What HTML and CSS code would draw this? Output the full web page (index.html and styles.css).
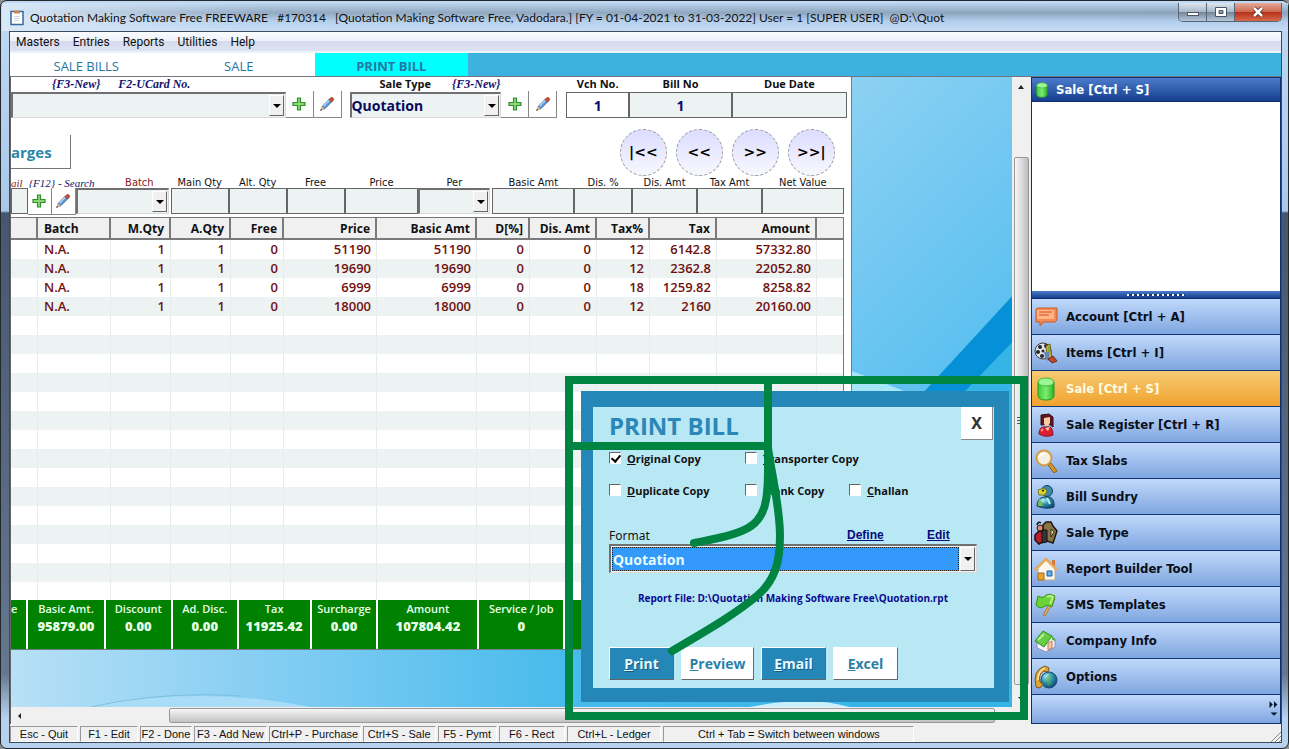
FILE: index.html
```html
<!DOCTYPE html>
<html lang="en">
<head>
<meta charset="utf-8">
<title>Quotation Making Software Free</title>
<link rel="stylesheet" href="styles.css">
</head>
<body>
<svg class="defs" aria-hidden="true">
  <defs>
    <linearGradient id="sky" x1="0" y1="0" x2="1" y2="0"><stop offset="0" stop-color="#b8e0f6"/><stop offset=".25" stop-color="#86cef3"/><stop offset=".55" stop-color="#48bbec"/><stop offset="1" stop-color="#35b4e8"/></linearGradient>
    <linearGradient id="skyRight" x1="0" y1="0" x2="0.25" y2="1"><stop offset="0" stop-color="#8dd1f3"/><stop offset=".6" stop-color="#5bc0f0"/><stop offset="1" stop-color="#4dbcee"/></linearGradient>
    <linearGradient id="green" x1="0" y1="0" x2="1" y2="0"><stop offset="0" stop-color="#3fc93b"/><stop offset=".5" stop-color="#7aee70"/><stop offset="1" stop-color="#2fae2b"/></linearGradient>
    <radialGradient id="globe" cx=".35" cy=".3" r=".8"><stop offset="0" stop-color="#b9f0f2"/><stop offset=".45" stop-color="#2b94ab"/><stop offset="1" stop-color="#0c3c70"/></radialGradient>
    <symbol id="plus" viewBox="0 0 16 16"><path d="M6.500 2h3v4.500H14v3H9.500V14h-3V9.500H2v-3h4.500z" fill="#8ed678" stroke="#2f8f2a" stroke-width="1.200"/></symbol>
    <symbol id="pencil" viewBox="0 0 16 16"><path d="M2 14l1.500-4 7-7 2.500 2.500-7 7z" fill="#5c9be0" stroke="#2f4f80" stroke-width=".8"/><path d="M4.500 10l6-6" stroke="#b6d8fa" stroke-width="1.200"/><path d="M10 3.500l2-2q3 0 2.500 2.500l-2 2z" fill="#d0502c" stroke="#8b2f18" stroke-width=".8"/><path d="M1.500 14.500l1.500-4 2.500 2.500z" fill="#e9bd80"/><path d="M1 15l1-2 1 1z" fill="#222"/></symbol>
    <symbol id="cylinder" viewBox="0 0 24 24"><path d="M4 5v14q1 4 8 4t8-4V5z" fill="url(#green)" stroke="#229a20"/><path d="M4 5q1-4 8-4t8 4q-1 4-8 4T4 5z" fill="#9df594" stroke="#40b83b"/></symbol>
  </defs>
</svg>

<div class="window">
  <header class="titlebar">
    <svg class="title-icon" viewBox="0 0 14 16"><rect x="1" y="2" width="12" height="13" fill="#fff" stroke="#36699b" stroke-width="1.500"/><path d="M4 1h6v3H4z" fill="#c88458"/><path d="M4 7h6M4 9h6M4 11h5" stroke="#cbd8e8"/></svg>
    <span class="title-text">Quotation Making Software Free FREEWARE &nbsp; #170314 &nbsp; [Quotation Making Software Free, Vadodara.] [FY = 01-04-2021 to 31-03-2022] User = 1 [SUPER USER] &nbsp;@D:\Quot</span>
    <div class="window-buttons">
      <button class="wbtn" aria-label="Minimize"><svg viewBox="0 0 14 12"><rect x="1.500" y="6.500" width="11" height="3" fill="#fff" stroke="#4b5563"/></svg></button>
      <button class="wbtn" aria-label="Maximize"><svg viewBox="0 0 14 12"><path d="M1.500 1.500h11v9h-11zM5 4.500h4v3H5z" fill="#fff" stroke="#4b5563" fill-rule="evenodd"/></svg></button>
      <button class="wbtn wbtn-close" aria-label="Close"><svg viewBox="0 0 14 12"><path d="M3 2l8 8M11 2l-8 8" stroke="#4b2020" stroke-width="4"/><path d="M3 2l8 8M11 2l-8 8" stroke="#fff" stroke-width="2.500"/></svg></button>
    </div>
  </header>

  <div class="client">
    <nav class="menubar">
      <button>Masters</button><button>Entries</button><button>Reports</button><button>Utilities</button><button>Help</button>
    </nav>
    <nav class="tabs">
      <button class="tab">SALE BILLS</button><button class="tab">SALE</button><button class="tab tab-active">PRINT BILL</button>
    </nav>

    <div class="main">
      <div class="workspace">
        <div class="canvas">
          <svg class="wallpaper" viewBox="0 0 1003 629" preserveAspectRatio="none" aria-hidden="true">
            <rect width="1003" height="629" fill="url(#sky)"/>
            <rect x="841" width="162" height="629" fill="url(#skyRight)"/>
            <path d="M945 325L1003 265v364H841V325z" fill="#35b4e6"/>
            <path d="M841 293q50 18 80 32h-80z" fill="#a5e7f8"/>
            <path d="M905 325L1003 219v46L945 325z" fill="#0590d8"/>
            <path d="M80 629q110-22 220 0z" fill="#a9dcf6"/><path d="M80 629q70-16 150-11" stroke="#7cc0dc" fill="none"/>
            <path d="M740 629q60-12 100 0z" fill="#c9f0fb"/>
          </svg>

          <div class="form">
            <div class="head-grid">
              <div class="field">
                <div class="caption caption-party"><em>{F3-New}</em><em>F2-UCard No.</em></div>
                <div class="combo"><select aria-label="Party"><option></option></select><span class="arrow"></span></div>
              </div>
              <div class="tools"><button aria-label="Add party"><svg><use href="#plus"/></svg></button><button aria-label="Edit party"><svg><use href="#pencil"/></svg></button></div>
              <span></span>
              <div class="field">
                <div class="caption caption-type"><label for="stype">Sale Type</label><em>{F3-New}</em></div>
                <div class="combo"><select id="stype"><option>Quotation</option></select><span class="arrow"></span></div>
              </div>
              <div class="tools"><button aria-label="Add type"><svg><use href="#plus"/></svg></button><button aria-label="Edit type"><svg><use href="#pencil"/></svg></button></div>
              <span></span>
              <div class="field"><label class="caption" for="vch">Vch No.</label><input class="box box-white" id="vch" value="1"></div>
              <div class="field"><label class="caption" for="bill">Bill No</label><input class="box" id="bill" value="1"></div>
              <div class="field"><label class="caption" for="due">Due Date</label><input class="box" id="due"></div>
            </div>

            <div class="nav-row">
              <button class="charges">arges</button>
              <div class="record-nav">
                <button>|&lt;&lt;</button><button>&lt;&lt;</button><button>&gt;&gt;</button><button>&gt;&gt;|</button>
              </div>
            </div>

            <div class="entry-grid">
              <div class="field item-field">
                <div class="caption"><em class="maroon">ail</em><em>{F12} - Search</em></div>
                <div class="item-tools"><input class="box" aria-label="Item"><div class="tools"><button aria-label="Add item"><svg><use href="#plus"/></svg></button><button aria-label="Edit item"><svg><use href="#pencil"/></svg></button></div></div>
              </div>
              <div class="field batch"><label class="caption maroon" for="e0">Batch</label><div class="combo"><select id="e0"><option></option></select><span class="arrow"></span></div></div>
              <span></span>
              <div class="field"><label class="caption" for="e1">Main Qty</label><input class="box" id="e1"></div>
              <div class="field"><label class="caption" for="e2">Alt. Qty</label><input class="box" id="e2"></div>
              <div class="field"><label class="caption" for="e3">Free</label><input class="box" id="e3"></div>
              <div class="field"><label class="caption" for="e4">Price</label><input class="box" id="e4"></div>
              <div class="field"><label class="caption" for="e5">Per</label><div class="combo"><select id="e5"><option></option></select><span class="arrow"></span></div></div>
              <span></span>
              <div class="field"><label class="caption" for="e6">Basic Amt</label><input class="box" id="e6"></div>
              <div class="field"><label class="caption" for="e7">Dis. %</label><input class="box" id="e7"></div>
              <div class="field"><label class="caption" for="e8">Dis. Amt</label><input class="box" id="e8"></div>
              <div class="field"><label class="caption" for="e9">Tax Amt</label><input class="box" id="e9"></div>
              <div class="field"><label class="caption" for="e10">Net Value</label><input class="box" id="e10"></div>
            </div>

            <div class="lines">
              <table>
                <colgroup><col class="c27"><col class="c73"><col class="c60"><col class="c60"><col class="c53"><col class="c93"><col class="c100"><col class="c53"><col class="c67"><col class="c53"><col class="c67"><col class="c100"><col></colgroup>
                <thead><tr><th></th><th class="left">Batch</th><th>M.Qty</th><th>A.Qty</th><th>Free</th><th>Price</th><th>Basic Amt</th><th>D[%]</th><th>Dis. Amt</th><th>Tax%</th><th>Tax</th><th>Amount</th><th></th></tr></thead>
                <tbody>
                  <tr><td></td><td class="left">N.A.</td><td>1</td><td>1</td><td>0</td><td>51190</td><td>51190</td><td>0</td><td>0</td><td>12</td><td>6142.8</td><td>57332.80</td><td></td></tr>
                  <tr><td></td><td class="left">N.A.</td><td>1</td><td>1</td><td>0</td><td>19690</td><td>19690</td><td>0</td><td>0</td><td>12</td><td>2362.8</td><td>22052.80</td><td></td></tr>
                  <tr><td></td><td class="left">N.A.</td><td>1</td><td>1</td><td>0</td><td>6999</td><td>6999</td><td>0</td><td>0</td><td>18</td><td>1259.82</td><td>8258.82</td><td></td></tr>
                  <tr><td></td><td class="left">N.A.</td><td>1</td><td>1</td><td>0</td><td>18000</td><td>18000</td><td>0</td><td>0</td><td>12</td><td>2160</td><td>20160.00</td><td></td></tr>
                  <tr class="filler"><td></td><td></td><td></td><td></td><td></td><td></td><td></td><td></td><td></td><td></td><td></td><td></td><td></td></tr>
                </tbody>
              </table>
            </div>

            <div class="totals">
              <div class="clip"><span>e</span></div>
              <div><span>Basic Amt.</span><b>95879.00</b></div>
              <div><span>Discount</span><b>0.00</b></div>
              <div><span>Ad. Disc.</span><b>0.00</b></div>
              <div><span>Tax</span><b>11925.42</b></div>
              <div><span>Surcharge</span><b>0.00</b></div>
              <div><span>Amount</span><b>107804.42</b></div>
              <div><span>Service / Job</span><b>0</b></div>
              <div></div>
            </div>
          </div>
        </div>
        <div class="vscroll"><i class="up"></i><div class="vthumb"><span class="ridges"></span></div><i class="down"></i></div>
        <div class="hscroll"><i class="back"></i><div class="hthumb"><span class="ridges"></span></div><i class="forward"></i></div>

        <section class="callout">
          <div class="dialog" role="dialog" aria-label="Print bill">
            <div class="dialog-head"><h1>PRINT BILL</h1><button class="close">X</button></div>
            <div class="dialog-body">
              <div class="checks">
                <label><input type="checkbox" checked><span><u>O</u>riginal Copy</span></label>
                <label><input type="checkbox"><span><u>T</u>ransporter Copy</span></label>
                <span></span>
                <label><input type="checkbox"><span><u>D</u>uplicate Copy</span></label>
                <label><input type="checkbox"><span><u>B</u>lank Copy</span></label>
                <label><input type="checkbox"><span><u>C</u>hallan</span></label>
              </div>
              <div class="format-head"><label for="format">Format</label><a href="#define">Define</a><a href="#edit">Edit</a></div>
              <div class="combo format"><select id="format"><option>Quotation</option></select><span class="arrow"></span></div>
              <p class="report">Report File: D:\Quotation Making Software Free\Quotation.rpt</p>
              <div class="actions">
                <button class="solid"><u>P</u>rint</button><button class="wide"><u>P</u>review</button><button class="solid"><u>E</u>mail</button><button><u>E</u>xcel</button>
              </div>
            </div>
          </div>
          <svg class="ink" viewBox="0 0 463 344" aria-hidden="true"><g fill="none" stroke="#008442" stroke-width="8" stroke-linecap="round" stroke-linejoin="round"><path d="M4 4h455v336H4z" stroke-linejoin="miter"/><path d="M4 70h199V4"/><path d="M203 66v28c0 28-2 48-20 58-15 8-34 11-54 15"/><path d="M203 72c4 28 12 60 12 88 0 26-5 44-22 59-25 21-54 37-86 56"/></g></svg>
        </section>
      </div>

      <aside class="sidebar">
        <div class="side-head"><svg><use href="#cylinder"/></svg>Sale [Ctrl + S]</div>
        <div class="side-blank"></div>
        <div class="splitter"></div>
        <button class="item"><svg viewBox="0 0 24 24"><path d="M2 4l1-1h20v12l-2 2H9l-3 4v-4H2z" fill="#f38b55" stroke="#c65d2c"/><path d="M3 5h17v9H3z" fill="#ffb589"/><path d="M5 7h13M5 10h10" stroke="#e37039" stroke-width="1.500"/></svg>Account [Ctrl + A]</button>
        <button class="item"><svg viewBox="0 0 24 24"><circle cx="9" cy="10" r="8" fill="#e2e5e8" stroke="#3b3d42"/><g fill="#24262b"><circle cx="6" cy="6" r="2"/><circle cx="12" cy="5" r="2"/><circle cx="4" cy="11" r="2"/><circle cx="8" cy="15" r="2"/><circle cx="9" cy="10" r="1.500"/></g><path d="M12 5l4-2 2 14-5 2z" fill="#d8b438" stroke="#755d20"/><path d="M14 5h2v10h-3z" fill="#70b541"/><path d="M10 11h5v9l-4-3z" fill="#6686b9"/><path d="M14 18l5-3 4 5-5 2z" fill="#c14827" stroke="#69301f"/></svg>Items [Ctrl + I]</button>
        <button class="item item-active"><svg><use href="#cylinder"/></svg>Sale [Ctrl + S]</button>
        <button class="item"><svg viewBox="0 0 24 24"><path d="M7 12V2l8-1 4 3v10l-4-3z" fill="#611522" stroke="#3d0d16"/><path d="M10 5l6-1v6l-3 4-3-3z" fill="#f4cda5"/><path d="M5 21q0-8 7-7 7-2 7 8-7 3-14-1z" fill="#db2030" stroke="#8b1020"/><path d="M11 15l3 3 2-4z" fill="#f4cda5"/><path d="M7 18l2-2" stroke="#ff8c8c" stroke-width="2"/></svg>Sale Register [Ctrl + R]</button>
        <button class="item"><svg viewBox="0 0 24 24"><path d="M14 16l3-2 6 8-3 2z" fill="#d8942c" stroke="#88591b"/><circle cx="10" cy="9" r="7.500" fill="#f5efe0" stroke="#d19b48" stroke-width="2"/><path d="M5 8q2-4 6-3" stroke="#fff" stroke-width="2" fill="none"/></svg>Tax Slabs</button>
        <button class="item"><svg viewBox="0 0 24 24"><path d="M3 21q0-8 7-9h6q5 3 4 10-8 3-17-1z" fill="url(#globe)" stroke="#174466"/><circle cx="13" cy="6" r="5.500" fill="#3d87a8" stroke="#174466"/><path d="M4 5l6-2 3 3-2 4-6 0z" fill="#d7d330" stroke="#777b24"/><circle cx="9" cy="5.500" r="1" fill="#111"/><path d="M5 13l4 8H4z" fill="#87bc45"/><path d="M13 13l3 6" stroke="#bbf1e8" stroke-width="2"/></svg>Bill Sundry</button>
        <button class="item"><svg viewBox="0 0 24 24"><path d="M9 4l3-3h5l2 4 4 5-4 12-9-3z" fill="#8a7444" stroke="#1c1911" stroke-width="1.500"/><path d="M17 8l3 3-3 5z" fill="#f3e9b8" stroke="#302b1b"/><path d="M1 14l4-4 5 1v9l-5 3-4-4z" fill="#b8202c" stroke="#260e0e" stroke-width="1.500"/><path d="M8 9h5v12l-5 1z" fill="#34363b" stroke="#111"/><circle cx="6" cy="7" r="3" fill="#e48a72" stroke="#241a16"/><path d="M3 4q1-4 4-2" fill="none" stroke="#111" stroke-width="1.500"/></svg>Sale Type</button>
        <button class="item"><svg viewBox="0 0 24 24"><path d="M18 7V3h3v7z" fill="#d47836"/><path d="M4 11v12h17V11l-9-8z" fill="#fcf7ed" stroke="#b8aa94"/><path d="M1 13L12 2l11 11" fill="none" stroke="#e5aa60" stroke-width="2.500"/><path d="M4 16h6v7H4z" fill="#e8a332" stroke="#a66720"/><path d="M13 14h5v5h-5z" fill="#5ab3ec" stroke="#245d9f"/></svg>Report Builder Tool</button>
        <button class="item"><svg viewBox="0 0 24 24"><path d="M19 5l2 1-10 17-2-1z" fill="#e2b263" stroke="#af762e"/><path d="M4 3q5 3 8-1 4-2 9 1l-3 11q-4-3-7-1-5 4-9-1z" fill="#6bd337" stroke="#389516"/><path d="M13 4q3-2 6 0l-3 7" stroke="#baf18b" stroke-width="2" fill="none"/></svg>SMS Templates</button>
        <button class="item"><svg viewBox="0 0 24 24"><path d="M3 13v6l9 4 9-5v-8l-6-4z" fill="#f4f2fb" stroke="#9488bd"/><path d="M1 12L9 2l9 5-8 11z" fill="#66ce45" stroke="#2f9220"/><path d="M18 7l4 5-4-1z" fill="#4db332"/><path d="M14 14l4-2v7l-4 2z" fill="#f5c6a0" stroke="#bc825b"/><path d="M4 11l6-6" stroke="#b9f09a" stroke-width="2"/></svg>Company Info</button>
        <button class="item"><svg viewBox="0 0 24 24"><circle cx="15" cy="15" r="8" fill="url(#globe)" stroke="#184d75"/><path d="M11 13l4-3 4 2-3 3 2 4-4 2z" fill="#5aa950" opacity=".5"/><path d="M2 22Q-2 5 11 1l4 2-1 4-4-1Q4 9 6 17l3 2-3 4z" fill="#dda634" stroke="#7d551c"/><path d="M4 15q0-9 7-12" stroke="#ffe59a" fill="none" stroke-width="1.500"/></svg>Options</button>
        <div class="side-foot"><svg viewBox="0 0 10 16"><path d="M1 1l3 3-3 3zM5 1l3 3-3 3zM2 11h6l-3 3z" fill="#08142c"/></svg></div>
      </aside>
    </div>

    <footer class="statusbar">
      <span>Esc - Quit</span><span>F1 - Edit</span><span>F2 - Done</span><span>F3 - Add New</span><span>Ctrl+P - Purchase</span><span>Ctrl+S - Sale</span><span>F5 - Pymt</span><span>F6 - Rect</span><span>Ctrl+L - Ledger</span><span>Ctrl + Tab = Switch between windows</span>
      <svg class="grip" viewBox="0 0 10 10"><path d="M0 10L10 0M4 10l6-6M8 10l2-2" stroke="#888"/></svg>
    </footer>
  </div>
</div>
</body>
</html>
```
FILE: styles.css
```css
* { box-sizing: border-box; }
body { margin: 0; font-family: "Noto Sans", sans-serif; font-size: 12px; color: #111; background: #8d8d8d; }
button, input, select { font: inherit; color: inherit; margin: 0; padding: 0; border: 0; border-radius: 0; min-width: 0; }
em { font-family: "Liberation Serif", serif; color: #14146c; }
.defs { position: absolute; width: 0; height: 0; }

.window { display: flex; flex-direction: column; min-height: 100vh; padding: 2px 0 0 1px; border: 1px solid #23272e; border-radius: 7px; background: linear-gradient(#c0d9f3 0, #a9c8e8 210px, #46576d 212px, #64788f 90%, #b7d2ef 96%); }
.titlebar { display: flex; align-items: center; height: 28px; padding: 0 6px 0 8px; background: linear-gradient(90deg, #d7e8f8 0, rgba(215,232,248,.1) 20%, rgba(215,232,248,0)), linear-gradient(#b9d3ee, #8ba2bb 35%, #b2cdec 65%, #c5dcf5); }
.title-icon { width: 14px; height: 17px; margin-right: 6px; }
.title-text { flex: 1; white-space: nowrap; overflow: hidden; font-family: Lato, sans-serif; font-size: 12px; }
.window-buttons { display: flex; align-self: flex-start; border: 1px solid #566474; border-top: 0; border-radius: 0 0 5px 5px; overflow: hidden; }
.wbtn { display: flex; align-items: center; justify-content: center; width: 28px; height: 18px; background: linear-gradient(#dbe6f1, #a9b9ca 48%, #758698 52%, #b5c8db); border-right: 1px solid #566474; }
.wbtn svg { width: 14px; height: 12px; }
.wbtn-close { width: 46px; border: 0; background: linear-gradient(#e5aa99, #cd6a50 48%, #b6311b 52%, #d86a4b); }

.client { flex: 1; display: flex; flex-direction: column; margin: 0 6px 5px 7px; border: 1px solid #3c4a5c; background: #f0f0f0; }
.menubar { display: flex; align-items: center; gap: 13px; height: 19px; padding-left: 6px; background: linear-gradient(#fbfcfe, #eef1f9 45%, #d6dcee 50%, #dde2f3); }
.menubar button { background: none; font-family: Roboto, sans-serif; font-size: 12px; line-height: 18px; }
.tabs { display: flex; height: 26px; background: #3fb1e0; border-top: 2px solid #eaf4f6; border-bottom: 1px solid #70777c; }
.tab { flex: 0 0 12%; padding-top: 2px; font-family: "Open Sans", sans-serif; font-size: 13px; color: #2577a4; background: #fff; }
.tab-active { background: #0ff; font-weight: 700; }

.main { flex: 1; display: grid; grid-template-columns: minmax(0, 1fr) 250px; }
.workspace { position: relative; display: grid; grid-template-columns: minmax(0, 1fr) 18px; grid-template-rows: 1fr 17px; margin-right: 1px; border-left: 1px solid #666; }
.canvas { position: relative; padding-bottom: 57px; display: flex; }
.wallpaper { position: absolute; inset: 0; width: 100%; height: 100%; }
.form { position: relative; width: 84%; display: flex; flex-direction: column; background: #fff; border-right: 1px solid #6d7f88; border-bottom: 1px solid #6d7f88; }

.field { display: flex; flex-direction: column; min-width: 0; }
.caption { display: block; height: 14px; line-height: 14px; text-align: center; white-space: nowrap; }
.combo { position: relative; display: flex; height: 26px; border: 1px solid #d8d8d8; border-top: 2px solid #707070; border-left: 2px solid #707070; background: #edf2f3; }
.combo select { flex: 1; appearance: none; background: transparent; font-size: 14px; font-weight: 700; color: #0a0a5c; }
.arrow { position: absolute; right: 1px; top: 1px; bottom: 1px; width: 15px; background: #f0f0f0; border: 1px solid #fff; border-right-color: #666; border-bottom-color: #666; pointer-events: none; }
.arrow::after { content: ""; position: absolute; left: 3px; top: calc(50% - 2px); border: 4px solid transparent; border-top-color: #000; border-bottom: 0; }
.box { width: 100%; height: 26px; border: 1px solid #666; background: #edf2f3; text-align: center; font-size: 14px; font-weight: 700; color: #0a0a6c; }
.box-white { background: #fff; }
.tools { display: flex; align-self: end; height: 27px; }
.tools button { flex: 1; display: flex; align-items: center; justify-content: center; background: #fff; border-right: 1px solid #888; border-bottom: 1px solid #888; }
.tools svg { width: 16px; height: 16px; }

.head-grid { display: grid; grid-template-columns: 275fr 56fr 8fr 152fr 56fr 9fr 63fr 103fr 115fr; padding-right: 4px; }
.head-grid .caption { height: 15px; font-family: "Open Sans", sans-serif; font-size: 11px; font-weight: 700; }
.head-grid em { font-size: 12px; }
.head-grid .caption-party { display: flex; gap: 18px; padding-left: 41px; }
.head-grid .caption-type { display: flex; gap: 21px; padding-left: 30px; }

.nav-row { display: flex; justify-content: space-between; align-items: center; height: 58px; padding-right: 16px; }
.charges { width: 60px; height: 34px; margin-top: 10px; padding-right: 20px; background: #fff; border-right: 1px solid #777; border-bottom: 1px solid #777; font-family: "Open Sans", sans-serif; font-size: 15px; font-weight: 700; color: #2b87a8; }
.record-nav { display: flex; gap: 9px; margin-top: 10px; }
.record-nav button { width: 47px; height: 47px; border: 1px dashed #999; border-radius: 50%; background: linear-gradient(#dcdcff, #f8f8ff); font-family: "DejaVu Sans", sans-serif; font-size: 14px; font-weight: 700; color: #000; }

.entry-grid { display: grid; grid-template-columns: 65fr 93fr 2fr 58fr 58fr 58fr 74fr 72fr 2fr 82fr 58fr 65fr 65fr 82fr; padding-right: 7px; }
.entry-grid .caption { height: 12px; line-height: 14px; font-family: "DejaVu Sans Condensed", "DejaVu Sans", sans-serif; font-size: 11px; }
.entry-grid .item-field .caption { display: flex; gap: 6px; width: 90px; }
.entry-grid .batch .caption { padding-left: 34px; }
.entry-grid em { font-size: 11px; }
.entry-grid .maroon { color: #8b1a1a; }
.item-tools { display: grid; grid-template-columns: 17fr 48fr; }

.lines { flex: 1; display: flex; margin: 2px 7px 0 0; border-top: 1px solid #777; border-right: 1px solid #777; }
table { width: 100%; height: 100%; border-collapse: separate; border-spacing: 0; table-layout: fixed; }
.c27 { width: 27px; } .c53 { width: 53px; } .c60 { width: 60px; } .c67 { width: 67px; } .c73 { width: 73px; } .c93 { width: 93px; } .c100 { width: 100px; }
th, td { height: 19px; padding: 0 5px 0 6px; text-align: right; white-space: nowrap; line-height: 19px; border-right: 1px solid #e6ecec; font-family: "Open Sans", sans-serif; font-size: 13px; font-weight: 600; }
td { color: #6f1010; vertical-align: top; }
th { height: 22px; background: #f0f0f0; color: #111; border-right: 2px solid #7a7a7a; border-bottom: 2px solid #7a7a7a; font-size: 12px; font-weight: 700; }
th:last-child, td:last-child { border-right: 0; padding: 0; }
th.left, td.left { text-align: left; }
tbody tr:nth-child(even) td { background: #edf2f3; }
.filler td { height: auto; background: repeating-linear-gradient(#fff 0 19px, #edf2f3 19px 38px); }

.totals { display: grid; grid-template-columns: 15fr 76fr 65fr 64fr 71fr 65fr 99fr 84fr 286fr; gap: 2px; height: 49px; }
.totals div { min-width: 0; background: #008200; color: #e8ffe8; display: flex; flex-direction: column; align-items: center; line-height: 17px; white-space: nowrap; font-family: "Open Sans", sans-serif; font-size: 11px; font-weight: 600; }
.totals b { font-size: 13px; line-height: 19px; }
.totals .clip { align-items: flex-start; }

.vscroll { display: flex; flex-direction: column; align-items: center; padding: 8px 0 7px; background: #f0f0f0; }
.vthumb { flex: 1; width: 15px; margin: 68px 0 12px; border: 1px solid #999; border-radius: 2px; background: linear-gradient(90deg, #f6f6f6, #d6d6d8 60%, #bdbdc3); }
.hscroll { grid-column: 1 / -1; display: flex; align-items: center; padding: 0 24px 0 7px; background: #f0f0f0; }
.hthumb { flex: 1; height: 15px; margin: 0 8px 0 15%; border: 1px solid #999; border-radius: 2px; background: linear-gradient(#f6f6f6, #dcdcde 50%, #c2c2c6); }
.vthumb, .hthumb { display: flex; align-items: center; justify-content: center; }
.ridges { width: 8px; height: 8px; background: repeating-linear-gradient(#555 0 1px, transparent 1px 3px); }
.hthumb .ridges { background: repeating-linear-gradient(90deg, #555 0 1px, transparent 1px 3px); }
.up, .down, .back, .forward { border: 3px solid transparent; }
.up { border-top: 0; border-bottom-color: #222; border-bottom-width: 4px; }
.down { border-bottom: 0; border-top-color: #222; }
.back { border-left: 0; border-right-color: #222; }
.forward { border-right: 0; border-left-color: #222; }

.callout { position: absolute; right: 2px; bottom: 4px; width: 463px; height: 344px; padding: 15px 19px 18px 16px; }
.ink { position: absolute; inset: 0; width: 100%; height: 100%; pointer-events: none; }
.dialog { height: 100%; border: solid #2587b7; border-width: 16px 15px 14px 12px; background: #b9e8f5; }
.dialog-head { display: flex; justify-content: space-between; padding: 0 1px 0 16px; }
.dialog-head h1 { margin: 0; font-family: "Open Sans", sans-serif; font-size: 24px; line-height: 38px; font-weight: 700; color: #2b87b7; }
.close { width: 32px; height: 33px; background: #fff; border-right: 1px solid #888; border-bottom: 1px solid #888; font-size: 16px; font-weight: 700; color: #333; }
.dialog-body { padding: 5px 17px 0 16px; }
.checks { display: grid; grid-template-columns: 136px 104px 1fr; row-gap: 16px; font-family: "Open Sans", sans-serif; font-size: 11px; font-weight: 700; }
.checks label { display: flex; align-items: center; gap: 6px; height: 16px; white-space: nowrap; }
.checks input { flex: none; appearance: none; width: 12px; height: 12px; border: 1px solid #fff; border-top-color: #666; border-left-color: #666; background: #fff; }
.checks input:checked::after { content: ""; display: block; width: 4px; height: 7px; margin: 0 0 0 3px; border: solid #000; border-width: 0 2px 2px 0; transform: rotate(40deg); }
.format-head { display: grid; grid-template-columns: 1fr 80px 50px; align-items: center; height: 16px; margin-top: 29px; }
.format-head a { font-family: "Liberation Sans", sans-serif; font-weight: 700; font-size: 12px; line-height: 16px; align-self: start; color: #0a0a7c; }
.format { height: 29px; margin-top: 1px; }
.format select { margin: 1px 17px 1px 1px; border: 1px dotted #222; background: #3399fb; color: #e6fbff; }
.report { margin: 17px 0 0; text-align: center; font-family: "Open Sans", sans-serif; font-size: 10px; line-height: 16px; font-weight: 700; color: #0a0a90; white-space: nowrap; }
.actions { display: flex; gap: 7px; margin-top: 41px; }
.actions button { width: 65px; height: 33px; background: #fff; color: #2b7fa8; border: 1px solid #fff; border-right-color: #666; border-bottom-color: #666; font-family: "Open Sans", sans-serif; font-size: 14px; font-weight: 700; }
.actions .wide { width: 73px; }
.actions .solid { background: #2587b7; color: #e4fbff; text-shadow: 1px 1px #175a80; }

.sidebar { display: flex; flex-direction: column; border: 1px solid #0f2f70; font-family: "DejaVu Sans Condensed", "DejaVu Sans", sans-serif; font-size: 13px; font-weight: 700; }
.side-head { display: flex; align-items: center; gap: 6px; height: 24px; padding-left: 2px; color: #fff; background: linear-gradient(#4b7ccb, #153f8d); border-bottom: 1px solid #0f2f70; }
.side-head svg { width: 16px; height: 16px; }
.side-blank { flex: 1; background: #fff; }
.splitter { display: flex; justify-content: center; align-items: center; height: 8px; background: linear-gradient(#4b7ccb, #153f8d); border-bottom: 1px solid #0f2f70; }
.splitter::before { content: ""; width: 58px; height: 2px; background: repeating-linear-gradient(90deg, #fff 0 2px, #183a78 2px 5px); }
.item { display: flex; align-items: center; gap: 8px; flex: 0 0 36px; padding-left: 2px; text-align: left; background: linear-gradient(#c0d9fb, #80a6e0); border-bottom: 1px solid #12357b; color: #0a0f18; }
.item svg { width: 24px; height: 24px; }
.item-active { background: linear-gradient(#f7cb74, #efa22d); color: #fffbe0; }
.side-foot { display: flex; justify-content: flex-end; align-items: center; height: 28px; background: linear-gradient(#c0d9fb, #80a6e0); }
.side-foot svg { width: 12px; height: 18px; }

.statusbar { display: grid; grid-template-columns: 68fr 58fr 52fr 73fr 92fr 73fr 59fr 66fr 95fr 251fr 365fr; gap: 2px; padding-top: 2px; height: 18px; font-family: "Liberation Sans", sans-serif; font-size: 11px; }
.statusbar span { min-width: 0; border: 1px solid #fff; border-top-color: #999; border-left-color: #999; text-align: center; line-height: 14px; white-space: nowrap; }
.grip { width: 10px; height: 10px; justify-self: end; align-self: end; }
```
